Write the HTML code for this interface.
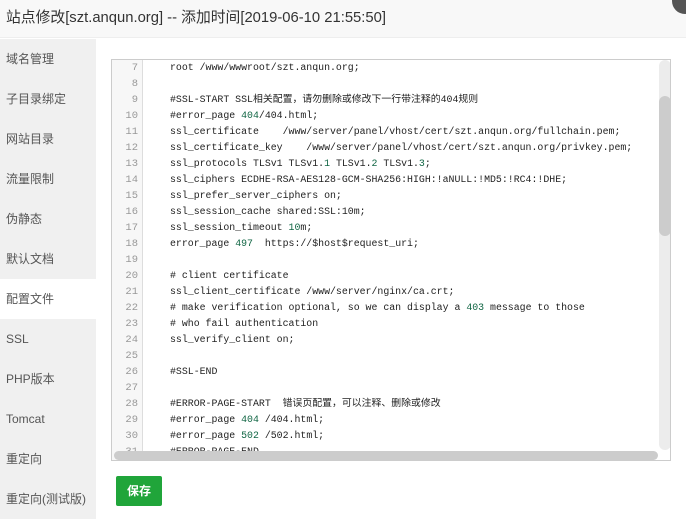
<!DOCTYPE html>
<html><head><meta charset="utf-8"><style>
*{margin:0;padding:0;box-sizing:border-box}
body{width:686px;height:519px;overflow:hidden;background:#fff;font-family:"Liberation Sans","Noto Sans CJK SC",sans-serif;position:relative}
.title{position:absolute;left:0;top:0;width:686px;height:38px;background:#f8f8f8;border-bottom:1px solid #eee;font-size:14.8px;color:#333;line-height:36px;padding-left:6px}
.close{position:absolute;left:672px;top:-12px;width:26px;height:26px;border-radius:50%;background:#555}
.side{position:absolute;left:0;top:39px;width:96px;height:480px;background:#f0f0f0}
.side div{height:40px;line-height:40px;font-size:12px;color:#555;padding-left:6px}
.side div.on{background:#fff}
.ed{position:absolute;left:111px;top:59px;width:560px;height:402px;border:1px solid #ccc;overflow:hidden;background:#fff}
.gut{position:absolute;left:0;top:0;width:31px;height:100%;background:#f7f7f7;border-right:1px solid #ddd}
.ln{position:absolute;left:0;width:26px;text-align:right;font-family:"Liberation Mono",monospace;font-size:10.5px;line-height:16px;color:#999}
.cd{position:absolute;left:58px;white-space:pre;font-family:"Liberation Mono","Noto Sans CJK SC",monospace;font-size:9.9px;line-height:16px;height:16px;color:#222}
.n{color:#164}
.hs{position:absolute;left:2px;top:391px;width:544px;height:9px;border-radius:5px;background:#ccc}
.vt{position:absolute;left:547px;top:0;width:12px;height:390px;background:#ececec;border-radius:6px}
.vh{position:absolute;left:547px;top:36px;width:12px;height:140px;background:#ccc;border-radius:6px}
.btn{position:absolute;left:116px;top:476px;width:46px;height:30px;background:#20a53a;border-radius:2px;color:#fff;font-size:12px;font-weight:bold;line-height:30px;text-align:center}
</style></head><body>
<div class="title">站点修改[szt.anqun.org] -- 添加时间[2019-06-10 21:55:50]</div>
<div class="close"></div>
<div class="side">
<div>域名管理</div><div>子目录绑定</div><div>网站目录</div><div>流量限制</div><div>伪静态</div><div>默认文档</div><div class="on">配置文件</div><div>SSL</div><div>PHP版本</div><div>Tomcat</div><div>重定向</div><div>重定向(测试版)</div>
</div>
<div class="ed">
<div class="gut"></div>
<div class="ln" style="top:0px">7</div><div class="cd" style="top:0px">root /www/wwwroot/szt.anqun.org;</div>
<div class="ln" style="top:16px">8</div>
<div class="ln" style="top:32px">9</div><div class="cd" style="top:32px">#SSL-START SSL相关配置，请勿删除或修改下一行带注释的404规则</div>
<div class="ln" style="top:48px">10</div><div class="cd" style="top:48px">#error_page <span class="n">404</span>/404.html;</div>
<div class="ln" style="top:64px">11</div><div class="cd" style="top:64px">ssl_certificate    /www/server/panel/vhost/cert/szt.anqun.org/fullchain.pem;</div>
<div class="ln" style="top:80px">12</div><div class="cd" style="top:80px">ssl_certificate_key    /www/server/panel/vhost/cert/szt.anqun.org/privkey.pem;</div>
<div class="ln" style="top:96px">13</div><div class="cd" style="top:96px">ssl_protocols TLSv1 TLSv1.<span class="n">1</span> TLSv1.<span class="n">2</span> TLSv1.<span class="n">3</span>;</div>
<div class="ln" style="top:112px">14</div><div class="cd" style="top:112px">ssl_ciphers ECDHE-RSA-AES128-GCM-SHA256:HIGH:!aNULL:!MD5:!RC4:!DHE;</div>
<div class="ln" style="top:128px">15</div><div class="cd" style="top:128px">ssl_prefer_server_ciphers on;</div>
<div class="ln" style="top:144px">16</div><div class="cd" style="top:144px">ssl_session_cache shared:SSL:10m;</div>
<div class="ln" style="top:160px">17</div><div class="cd" style="top:160px">ssl_session_timeout <span class="n">10</span>m;</div>
<div class="ln" style="top:176px">18</div><div class="cd" style="top:176px">error_page <span class="n">497</span>  https://$host$request_uri;</div>
<div class="ln" style="top:192px">19</div>
<div class="ln" style="top:208px">20</div><div class="cd" style="top:208px"># client certificate</div>
<div class="ln" style="top:224px">21</div><div class="cd" style="top:224px">ssl_client_certificate /www/server/nginx/ca.crt;</div>
<div class="ln" style="top:240px">22</div><div class="cd" style="top:240px"># make verification optional, so we can display a <span class="n">403</span> message to those</div>
<div class="ln" style="top:256px">23</div><div class="cd" style="top:256px"># who fail authentication</div>
<div class="ln" style="top:272px">24</div><div class="cd" style="top:272px">ssl_verify_client on;</div>
<div class="ln" style="top:288px">25</div>
<div class="ln" style="top:304px">26</div><div class="cd" style="top:304px">#SSL-END</div>
<div class="ln" style="top:320px">27</div>
<div class="ln" style="top:336px">28</div><div class="cd" style="top:336px">#ERROR-PAGE-START  错误页配置，可以注释、删除或修改</div>
<div class="ln" style="top:352px">29</div><div class="cd" style="top:352px">#error_page <span class="n">404</span> /404.html;</div>
<div class="ln" style="top:368px">30</div><div class="cd" style="top:368px">#error_page <span class="n">502</span> /502.html;</div>
<div class="ln" style="top:384px">31</div><div class="cd" style="top:384px">#ERROR-PAGE-END</div>
<div class="vt"></div><div class="vh"></div>
<div class="hs"></div>
</div>
<div class="btn">保存</div>
</body></html>
